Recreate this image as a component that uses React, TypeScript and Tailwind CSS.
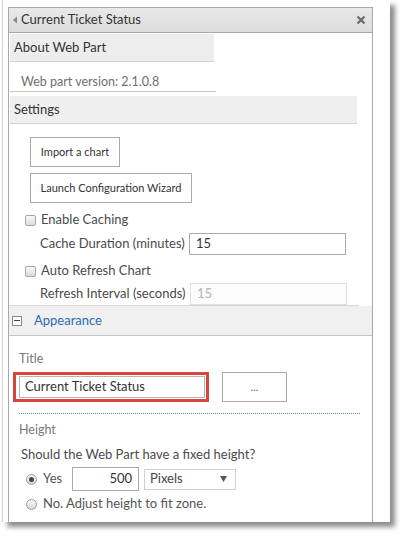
import React from 'react'

function Checkbox() {
  return (
    <span className="inline-block h-[11px] w-[11px] shrink-0 rounded-[2px] border border-[#a6a6a6] bg-gradient-to-b from-[#fafafa] to-[#dcdcdc]" />
  )
}

function Radio({ checked }: { checked?: boolean }) {
  return (
    <span className="flex h-[11px] w-[11px] shrink-0 items-center justify-center rounded-full border border-[#9c9c9c] bg-gradient-to-b from-[#fafafa] to-[#d6d6d6]">
      {checked && <span className="h-[5px] w-[5px] rounded-full bg-[#444]" />}
    </span>
  )
}

export default function App() {
  return (
    <div className="h-[537px] w-[404px] bg-white font-['Lato',sans-serif] text-[#4a4a4a]">
      <div className="ml-[2px] h-[522px] w-[388px] border-l border-[#d4d4d4] bg-white pl-[5px] pt-[7px] shadow-[5px_5px_5px_rgba(0,0,0,0.45)]">
        <div className="flex h-full w-[365px] flex-col border-x border-t border-[#a8a8a8]">
          {/* title bar */}
          <div className="flex h-[25px] shrink-0 items-center border-b border-[#a8a8a8] bg-gradient-to-b from-[#e9e9e9] to-[#dddddd] pl-[3px] pr-[6px]">
            <svg width="6" height="8" viewBox="0 0 6 8" className="mr-[3px]">
              <path d="M5 0.5 L0.8 4 L5 7.5 Z" fill="#8a8a8a" />
            </svg>
            <span className="text-[13px] text-[#333]">Current Ticket Status</span>
            <svg width="10" height="10" viewBox="0 0 10 10" className="ml-auto">
              <path d="M1.5 1.5 L8.5 8.5 M8.5 1.5 L1.5 8.5" stroke="#6b6b6b" strokeWidth="2.2" />
            </svg>
          </div>

          {/* About */}
          <div className="ml-px mt-px flex h-[28px] w-[204px] items-center border-b border-[#d2d2d2] bg-[#ededed] pl-[4px] text-[13px] text-[#333]">
            About Web Part
          </div>
          <div className="ml-px flex h-[30px] w-[206px] items-end border-b border-[#c8c8c8] pb-[1px] pl-[11px] text-[12.5px] leading-[16px] text-[#707070]">
            Web part version: 2.1.0.8
          </div>

          {/* Settings */}
          <div className="ml-px mt-[4px] flex h-[28px] w-[347px] items-center border-b border-[#d2d2d2] bg-[#efefef] pl-[4px] text-[13px] text-[#333]">
            Settings
          </div>
          <div className="flex flex-col pl-[21px]">
            <button className="mt-[13px] h-[30px] w-[90px] border border-[#ababab] bg-white text-[11px] text-[#333]">
              Import a chart
            </button>
            <button className="mt-[6px] h-[30px] w-[162px] border border-[#ababab] bg-white text-[11px] text-[#333]">
              Launch Configuration Wizard
            </button>
          </div>
          <div className="mt-[7px] flex h-[20px] items-center gap-[5px] pl-[16px] text-[13px]">
            <Checkbox />
            <span>Enable Caching</span>
          </div>
          <div className="mt-[3px] flex h-[22px] items-center pl-[31px] text-[13px]">
            <span className="w-[149px] shrink-0 whitespace-nowrap">Cache Duration (minutes)</span>
            <div className="flex h-[22px] w-[157px] items-center border border-[#ababab] pl-[6px] text-[13px] text-[#333]">
              15
            </div>
          </div>
          <div className="mt-[6px] flex h-[20px] items-center gap-[5px] pl-[16px] text-[13px]">
            <Checkbox />
            <span>Auto Refresh Chart</span>
          </div>
          <div className="mt-[2px] flex h-[22px] items-center pl-[31px] text-[13px]">
            <span className="w-[150px] shrink-0 whitespace-nowrap">Refresh Interval (seconds)</span>
            <div className="flex h-[22px] w-[157px] items-center border border-[#e0e0e0] bg-[#fcfcfc] pl-[6px] text-[13px] text-[#b4b4b4]">
              15
            </div>
          </div>
          <div className="h-px w-[350px] bg-[#d6d6d6]" />

          {/* Appearance */}
          <div className="flex h-[30px] items-center border-b border-[#c4c4c4] bg-[#f0f0f0] pl-[3px]">
            <span className="flex h-[10px] w-[10px] items-center justify-center border border-[#8a8a8a] bg-white">
              <span className="h-px w-[6px] bg-[#444]" />
            </span>
            <span className="ml-[12px] text-[13px] text-[#2b6db6]">Appearance</span>
          </div>

          <div className="mt-[15px] pl-[10px] text-[12.5px] leading-[16px] text-[#777]">Title</div>
          <div className="mt-[5px] flex items-center pl-[4px]">
            <div className="flex h-[30px] w-[196px] items-center border-[3px] border-[#d9443d] pl-[3px] pr-px">
              <div className="flex h-[22px] w-full items-center border border-[#b5b5b5] bg-white pl-[5px] text-[13px] text-[#333]">
                Current Ticket Status
              </div>
            </div>
            <button className="ml-[13px] h-[30px] w-[65px] border border-[#ababab] bg-white text-[11px] text-[#666]">
              ...
            </button>
          </div>
          <div className="ml-[10px] mt-[11px] w-[341px] border-t border-dotted border-[#5d86c6]" />

          <div className="mt-[8px] pl-[10px] text-[12.5px] leading-[16px] text-[#777]">Height</div>
          <div className="mt-[8px] pl-[12px] text-[13px] leading-[16px]">
            Should the Web Part have a fixed height?
          </div>
          <div className="mt-[5px] flex h-[24px] items-center pl-[17px] text-[13px]">
            <Radio checked />
            <span className="ml-[6px] w-[29px] text-[#555]">Yes</span>
            <div className="flex h-[24px] w-[67px] items-center justify-end border border-[#ababab] pr-[6px] text-[13px] text-[#333]">
              500
            </div>
            <div className="ml-[5px] flex h-[21px] w-[92px] items-center border border-[#d0d0d0] pl-[5px] pr-[8px] text-[13px] text-[#444]">
              <span>Pixels</span>
              <svg width="7" height="6" viewBox="0 0 7 6" className="ml-auto">
                <path d="M0 0 H7 L3.5 6 Z" fill="#555" />
              </svg>
            </div>
          </div>
          <div className="mt-[4px] flex h-[18px] items-center pl-[17px] text-[13px]">
            <Radio />
            <span className="ml-[6px] text-[#555]">No. Adjust height to fit zone.</span>
          </div>
        </div>
      </div>
    </div>
  )
}
